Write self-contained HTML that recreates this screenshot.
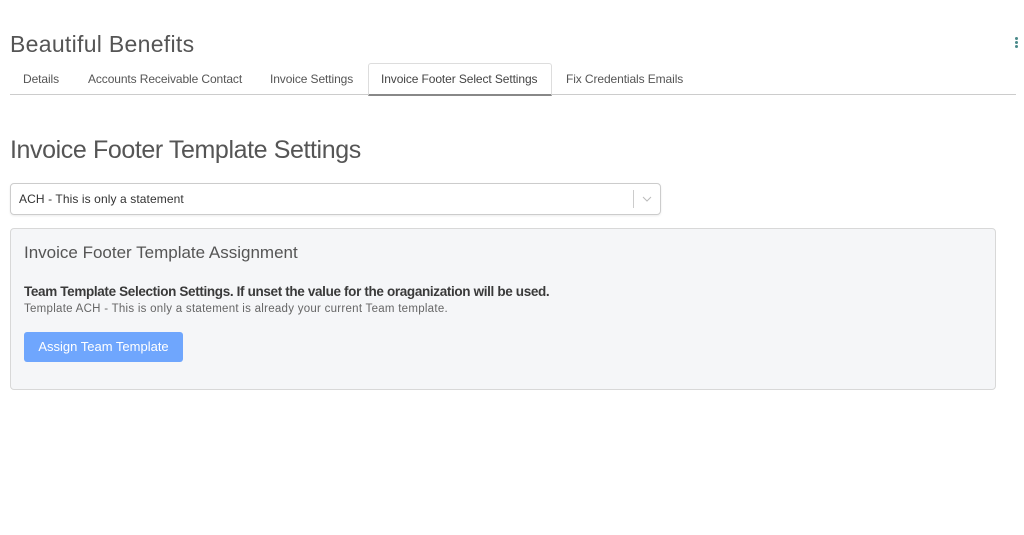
<!DOCTYPE html>
<html><head><style>
body{margin:0;width:1024px;height:535px;background:#fff;font-family:"Liberation Sans",sans-serif;position:relative;overflow:hidden;color:#555}
.a{position:absolute;white-space:nowrap}
</style></head><body>
<div class="a" style="left:10px;top:31px;font-size:23px;color:#555;letter-spacing:0.3px">Beautiful Benefits</div>
<div class="a" style="left:1015px;top:37px;width:3px;height:3px;background:#4a8a8a;border-radius:50%"></div>
<div class="a" style="left:1015px;top:41px;width:3px;height:3px;background:#4a8a8a;border-radius:50%"></div>
<div class="a" style="left:1015px;top:45px;width:3px;height:3px;background:#4a8a8a;border-radius:50%"></div>
<div class="a" style="left:10px;top:94px;width:1006px;height:1px;background:#ccc"></div>
<div class="a" style="left:368px;top:63px;width:182px;height:30px;border:1px solid #ddd;border-bottom:2px solid #888;border-radius:3px 3px 0 0;background:#fff"></div>
<div class="a" style="left:23px;top:72px;font-size:12px;color:#555;letter-spacing:-0.1px">Details</div>
<div class="a" style="left:88px;top:72px;font-size:12px;color:#555;letter-spacing:-0.1px">Accounts Receivable Contact</div>
<div class="a" style="left:270px;top:72px;font-size:12px;color:#555;letter-spacing:-0.1px">Invoice Settings</div>
<div class="a" style="left:381px;top:72px;font-size:12px;color:#444;letter-spacing:-0.1px">Invoice Footer Select Settings</div>
<div class="a" style="left:566px;top:72px;font-size:12px;color:#555;letter-spacing:-0.1px">Fix Credentials Emails</div>
<div class="a" style="left:10px;top:136px;font-size:25px;color:#555;letter-spacing:-0.4px">Invoice Footer Template Settings</div>
<div class="a" style="left:10px;top:183px;width:649px;height:30px;border:1px solid #ccc;border-radius:4px;box-shadow:0 1px 2px rgba(0,0,0,.08)"></div>
<div class="a" style="left:19px;top:192px;font-size:12px;color:#333;letter-spacing:0.1px">ACH - This is only a statement</div>
<div class="a" style="left:633px;top:190px;width:1px;height:18px;background:#ccc"></div>
<svg class="a" style="left:642px;top:195px" width="10" height="8"><path d="M1 2 L5 6 L9 2" fill="none" stroke="#bbb" stroke-width="1"/></svg>
<div class="a" style="left:10px;top:228px;width:984px;height:160px;border:1px solid #d8d8d8;border-radius:4px;background:#f5f6f8"></div>
<div class="a" style="left:24px;top:243px;font-size:17px;color:#555;letter-spacing:0px">Invoice Footer Template Assignment</div>
<div class="a" style="left:24px;top:284px;font-size:13.5px;color:#3a3a3a;font-weight:bold;letter-spacing:-0.35px">Team Template Selection Settings. If unset the value for the oraganization will be used.</div>
<div class="a" style="left:24px;top:303px;font-size:11.5px;color:#666;letter-spacing:0.27px">Template ACH - This is only a statement is already your current Team template.</div>
<div class="a" style="left:24px;top:332px;width:159px;height:30px;background:#6fa6fd;border-radius:3px;color:#fff;font-size:13px;line-height:30px;text-align:center">Assign Team Template</div>
</body></html>
